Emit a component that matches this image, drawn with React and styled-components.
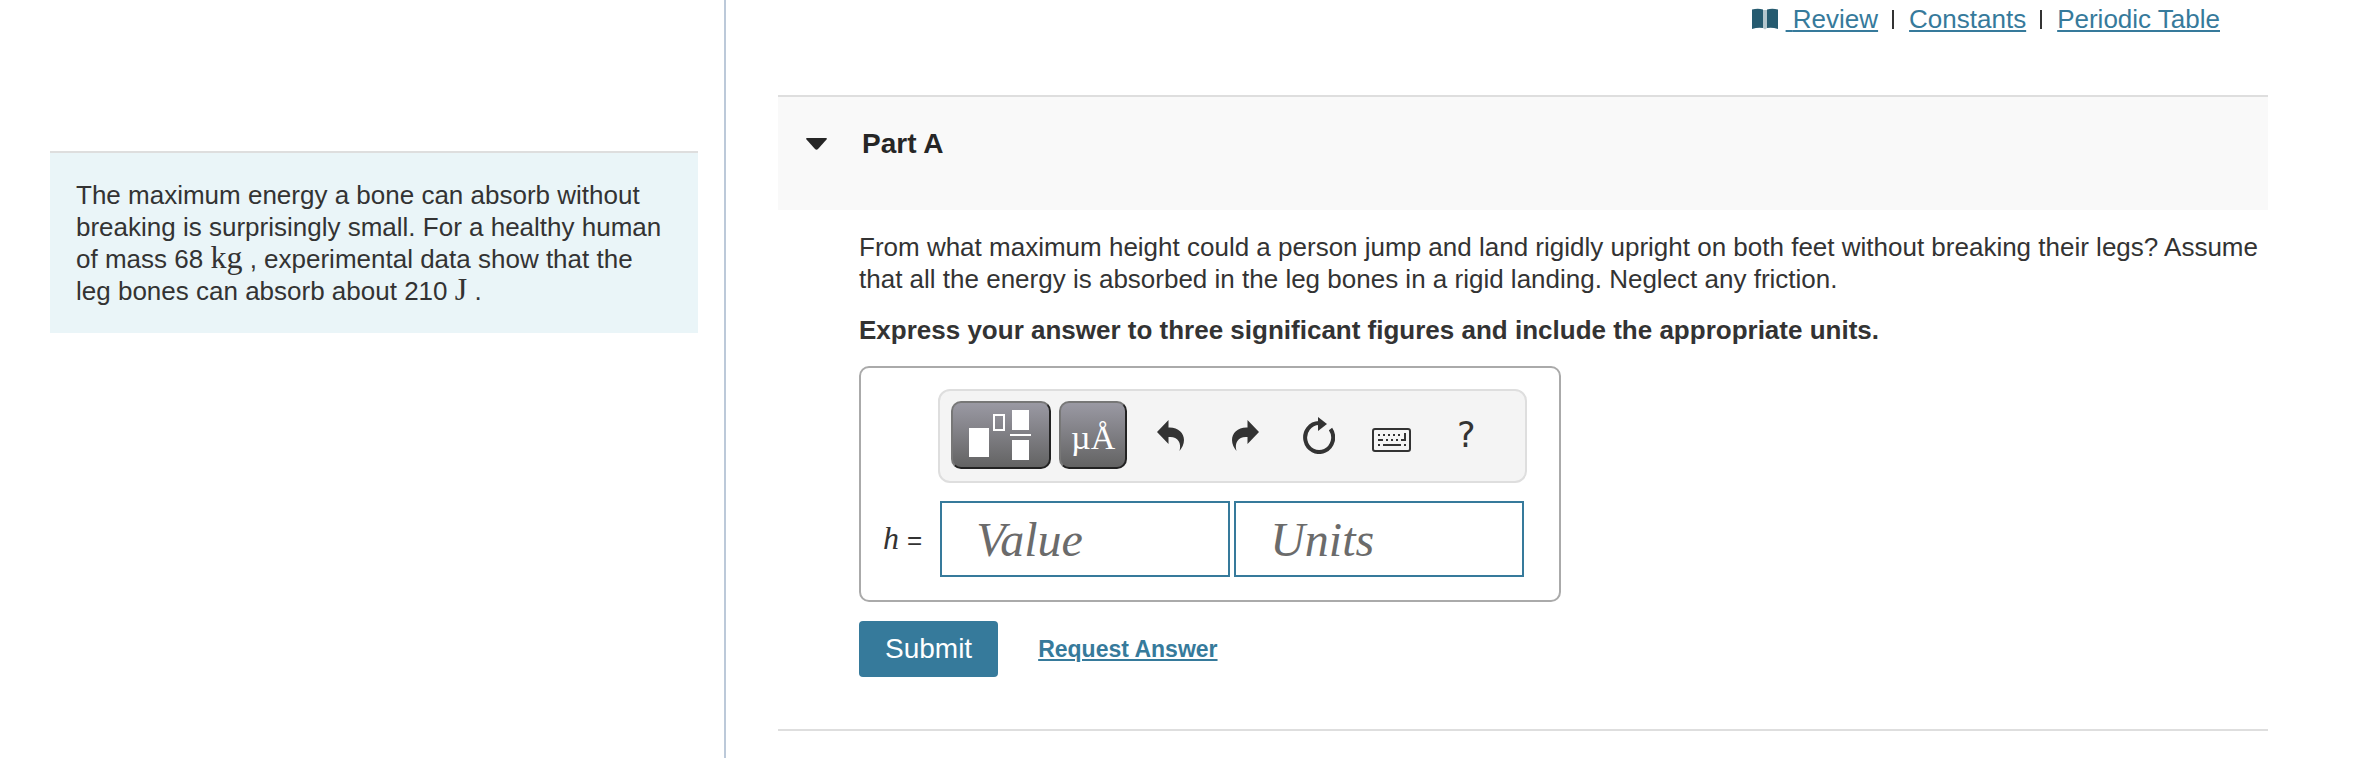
import { useState } from 'react';
import styled, { createGlobalStyle, ThemeProvider } from 'styled-components';

const theme = {
  color: {
    text: '#333333',
    heading: '#262626',
    link: '#367a9b',
    book: '#265b70',
    line: '#dedede',
    divider: '#bcc9d9',
    infoBg: '#eaf5f8',
    headerBg: '#f9f9f9',
    toolbarBg: '#f4f4f4',
    boxLine: '#aaaaaa',
    placeholder: '#6b6b6b',
    white: '#ffffff',
  },
  font: {
    sans: "'Liberation Sans', Arial, sans-serif",
    serif: "'Liberation Serif', 'Times New Roman', serif",
  },
  size: { m: '26px', l: '28px' },
};

const GlobalStyle = createGlobalStyle`
  * {
    box-sizing: border-box;
  }

  body {
    margin: 0;
    background: #ffffff;
    color: ${theme.color.text};
    font-family: ${theme.font.sans};
    font-size: ${theme.size.m};
    line-height: 32px;
  }
`;

const Page = styled.div`
  display: grid;
  grid-template-columns: 724fr 1636fr;
  min-height: 100vh;
`;

const Sidebar = styled.aside`
  padding: 151px 26px 0 50px;
`;

const ProblemText = styled.p`
  margin: 0;
  padding: 26px;
  border-top: 2px solid ${({ theme }) => theme.color.line};
  background: ${({ theme }) => theme.color.infoBg};
`;

const Unit = styled.span`
  font-family: ${({ theme }) => theme.font.serif};
  font-size: 32px;
  line-height: 28px;
`;

const Main = styled.main`
  padding: 3px 92px 0 52px;
  border-left: 2px solid ${({ theme }) => theme.color.divider};
`;

const ResourceNav = styled.nav`
  display: flex;
  justify-content: flex-end;
  align-items: center;
  padding-right: 48px;
  margin-bottom: 60px;
`;

const Link = styled.a`
  color: ${({ theme }) => theme.color.link};
  font-weight: ${({ $bold }) => ($bold ? 700 : 400)};
  font-size: ${({ $bold }) => ($bold ? '23px' : 'inherit')};
  text-decoration: underline;
  text-decoration-thickness: 2px;
  text-underline-offset: 2px;
`;

const Separator = styled.span`
  width: 2px;
  height: 19px;
  margin: 0 15px 0 14px;
  background: ${({ theme }) => theme.color.text};
`;

const BookSvg = styled.svg`
  margin-right: 8px;
  fill: ${({ theme }) => theme.color.book};
`;

const Part = styled.section`
  border-top: 2px solid ${({ theme }) => theme.color.line};
  border-bottom: 2px solid ${({ theme }) => theme.color.line};
`;

const PartHeader = styled.h2`
  margin: 0;
  padding: 31px 28px 50px;
  background: ${({ theme }) => theme.color.headerBg};
  font-size: ${({ theme }) => theme.size.l};
  line-height: 32px;
`;

const PartToggle = styled.button`
  display: flex;
  align-items: center;
  gap: 35px;
  padding: 0;
  border: 0;
  background: none;
  color: ${({ theme }) => theme.color.heading};
  font: inherit;
  cursor: pointer;
`;

const PartBody = styled.div`
  padding: 21px 0 52px 81px;
`;

const Question = styled.p`
  margin: 0 0 19px;
`;

const Instruction = styled.p`
  margin: 0 0 20px;
  font-weight: 700;
`;

const AnswerBox = styled.div`
  display: grid;
  grid-template-columns: auto auto;
  align-items: center;
  gap: 18px 16px;
  width: fit-content;
  padding: 21px 32px 23px 22px;
  border: 2px solid ${({ theme }) => theme.color.boxLine};
  border-radius: 10px;
`;

const Toolbar = styled.div`
  grid-column: 2;
  display: flex;
  align-items: center;
  gap: 8px;
  padding: 10px 11px 12px;
  border: 2px solid ${({ theme }) => theme.color.line};
  border-radius: 12px;
  background: ${({ theme }) => theme.color.toolbarBg};
`;

const PaletteButton = styled.button`
  display: flex;
  align-items: center;
  justify-content: center;
  width: ${({ $wide }) => ($wide ? '100px' : '68px')};
  height: 68px;
  padding: 0;
  border: 2px solid;
  border-color: #777777 #222222 #222222 #777777;
  border-radius: 10px;
  background: linear-gradient(#9a99a3, #636363);
  color: ${({ theme }) => theme.color.white};
  font-family: ${({ theme }) => theme.font.serif};
  font-size: 34px;
  line-height: 48px;
  padding-top: ${({ $wide }) => ($wide ? '0' : '6px')};
  cursor: pointer;
`;

const ToolGroup = styled.div`
  display: flex;
  flex: 1;
  justify-content: space-between;
  padding: 0 20px 0 8px;
`;

const ToolButton = styled.button`
  display: flex;
  align-items: center;
  justify-content: center;
  width: 56px;
  height: 56px;
  padding: 0;
  border: 0;
  background: none;
  color: ${({ theme }) => theme.color.text};
  font-family: 'DejaVu Sans', sans-serif;
  font-size: 35px;
  cursor: pointer;
`;

const AnswerLabel = styled.label`
  display: flex;
  align-items: baseline;
  gap: 8px;
`;

const Variable = styled.i`
  font-family: ${({ theme }) => theme.font.serif};
  font-size: 32px;
`;

const Fields = styled.div`
  display: flex;
  gap: 4px;
  padding: 0 3px 0 2px;
`;

const Field = styled.input`
  width: 290px;
  height: 76px;
  padding: 0 34px;
  border: 2px solid ${({ theme }) => theme.color.link};
  border-radius: 0;
  background: ${({ theme }) => theme.color.white};
  color: ${({ theme }) => theme.color.text};
  font-family: ${({ theme }) => theme.font.serif};
  font-size: 48px;

  &::placeholder {
    color: ${({ theme }) => theme.color.placeholder};
    font-style: italic;
    opacity: 1;
  }
`;

const Actions = styled.div`
  display: flex;
  align-items: center;
  gap: 40px;
  margin-top: 19px;
`;

const SubmitButton = styled.button`
  height: 56px;
  padding: 0 26px;
  border: 0;
  border-radius: 4px;
  background: ${({ theme }) => theme.color.link};
  color: ${({ theme }) => theme.color.white};
  font-family: inherit;
  font-size: ${({ theme }) => theme.size.l};
  cursor: pointer;
`;

const BookIcon = () => (
  <BookSvg width="26" height="22" viewBox="0 0 26 22" aria-hidden="true">
    <path d="M0 1.500Q6 0 11 1.500V20Q6 19 0 21ZM15 1.500Q20 0 26 1.500V21Q20 19 15 20Z" />
    <path d="M11 2h4v18l-2 1.500-2-1.500Z" opacity="0.35" />
  </BookSvg>
);

const CaretIcon = () => (
  <svg width="21" height="12" viewBox="0 0 21 12" fill="currentColor" aria-hidden="true">
    <path d="M1 0H20Q21.500 0 20.500 1.500L12 11Q10.500 12.500 9 11L.5 1.500Q-.5 0 1 0Z" />
  </svg>
);

const TemplateIcon = () => (
  <svg width="64" height="52" viewBox="0 0 64 52" fill="#fff" aria-hidden="true">
    <path d="M0 19h20v29H0zM43 1h17v20H43zM43 31h17v20H43zM41 25h21v2H41z" />
    <path d="M25 6h10v15H25z" fill="none" stroke="#fff" strokeWidth="2" />
  </svg>
);

const UndoIcon = () => (
  <svg width="28" height="31" viewBox="0 0 28 31" fill="currentColor" aria-hidden="true">
    <path d="M0 12 11.500 0V7.500C21 7 27 13 27 20C27 24 25 28 22.500 31C25 22 20 16 11.500 17V24Z" />
  </svg>
);

const RedoIcon = () => (
  <svg width="28" height="31" viewBox="0 0 28 31" fill="currentColor" aria-hidden="true">
    <path d="M28 12 16.500 0V7.500C7 7 1 13 1 20C1 24 3 28 5.500 31C3 22 8 16 16.500 17V24Z" />
  </svg>
);

const ResetIcon = () => (
  <svg width="32" height="37" viewBox="0 0 32 37" fill="currentColor" aria-hidden="true">
    <path
      d="M16 6A14 14.500 0 1 0 27.500 12"
      fill="none"
      stroke="currentColor"
      strokeWidth="4"
    />
    <path d="M15 0 24 7 15 14Z" />
  </svg>
);

const KeyboardIcon = () => (
  <svg width="40" height="34" viewBox="0 -10 40 34" fill="currentColor" aria-hidden="true">
    <rect x="1" y="1" width="37" height="22" rx="2" fill="none" stroke="currentColor" strokeWidth="2" />
    <path d="M6 6h2v2H6zM11 6h2v2h-2zM16 6h2v2h-2zM21 6h2v2h-2zM26 6h2v2h-2zM32 5h2v8h-5v-2h3z" />
    <path d="M6 11h5v2H6zM14 11h2v2h-2zM19 11h2v2h-2zM24 11h2v2h-2zM6 16h2v2H6zM11 16h18v2H11zM32 16h2v2h-2z" />
  </svg>
);

const ANSWER_TOOLS = [
  { name: 'Undo', icon: <UndoIcon /> },
  { name: 'Redo', icon: <RedoIcon /> },
  { name: 'Reset', icon: <ResetIcon /> },
  { name: 'Keyboard shortcuts', icon: <KeyboardIcon /> },
  { name: 'Help', icon: '?' },
];

const AnswerForm = () => (
  <form onSubmit={(e) => e.preventDefault()}>
    <AnswerBox>
      <Toolbar role="toolbar" aria-label="Answer tools">
        <PaletteButton type="button" $wide aria-label="Templates">
          <TemplateIcon />
        </PaletteButton>
        <PaletteButton type="button" aria-label="Units">
          µÅ
        </PaletteButton>
        <ToolGroup>
          {ANSWER_TOOLS.map(({ name, icon }) => (
            <ToolButton key={name} type="button" aria-label={name}>
              {icon}
            </ToolButton>
          ))}
        </ToolGroup>
      </Toolbar>
      <AnswerLabel htmlFor="value">
        <Variable>h</Variable>
        <span>=</span>
      </AnswerLabel>
      <Fields>
        <Field id="value" placeholder="Value" />
        <Field aria-label="Units" placeholder="Units" />
      </Fields>
    </AnswerBox>
    <Actions>
      <SubmitButton type="submit">Submit</SubmitButton>
      <Link href="#answer" $bold>
        Request Answer
      </Link>
    </Actions>
  </form>
);

export default function App() {
  const [open, setOpen] = useState(true);

  return (
    <ThemeProvider theme={theme}>
      <GlobalStyle />
      <Page>
        <Sidebar>
          <ProblemText>
            The maximum energy a bone can absorb without breaking is surprisingly small. For a
            healthy human of mass 68 <Unit>kg</Unit> , experimental data show that the leg bones
            can absorb about 210 <Unit>J</Unit> .
          </ProblemText>
        </Sidebar>
        <Main>
          <ResourceNav>
            <BookIcon />
            <Link href="#review">{'\u00a0'}Review</Link>
            <Separator />
            <Link href="#constants">Constants</Link>
            <Separator />
            <Link href="#periodic-table">Periodic Table</Link>
          </ResourceNav>
          <Part>
            <PartHeader>
              <PartToggle type="button" aria-expanded={open} onClick={() => setOpen(!open)}>
                <CaretIcon />
                Part A
              </PartToggle>
            </PartHeader>
            {open && (
              <PartBody>
                <Question>
                  From what maximum height could a person jump and land rigidly upright on both
                  feet without breaking their legs? Assume that all the energy is absorbed in the
                  leg bones in a rigid landing. Neglect any friction.
                </Question>
                <Instruction>
                  Express your answer to three significant figures and include the appropriate
                  units.
                </Instruction>
                <AnswerForm />
              </PartBody>
            )}
          </Part>
        </Main>
      </Page>
    </ThemeProvider>
  );
}
